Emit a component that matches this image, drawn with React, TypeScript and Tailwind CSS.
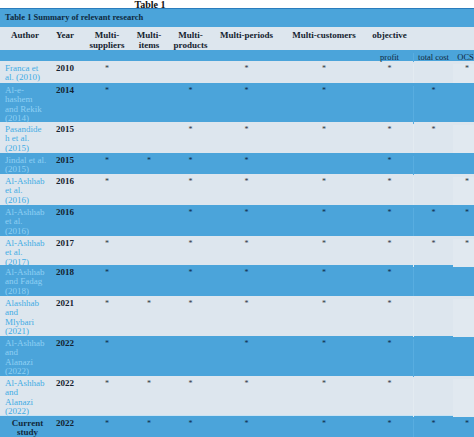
import React from 'react';

type Row = {
  author: string[];
  year: string;
  marks: number[]; // 0 sup, 1 items, 2 prod, 3 periods, 4 cust, 5 profit, 6 total, 7 ocsi
  h: string;
  blue: boolean;
  current?: boolean;
};

const cols = 'grid grid-cols-[50px_36px_42px_42px_41px_71px_84px_47px_40px_28px]';

const rows: Row[] = [
  { author: ['Franca et', 'al. (2010)'], year: '2010', marks: [0, 3, 4, 5, 7], h: 'h-[22px]', blue: false },
  { author: ['Al-e-', 'hashem', 'and Rekik', '(2014)'], year: '2014', marks: [0, 2, 3, 4, 6], h: 'h-[39px]', blue: true },
  { author: ['Pasandide', 'h et al.', '(2015)'], year: '2015', marks: [2, 3, 4, 5, 6], h: 'h-[31px]', blue: false },
  { author: ['Jindal et al.', '(2015)'], year: '2015', marks: [0, 1, 2, 3, 5], h: 'h-[21px]', blue: true },
  { author: ['Al-Ashhab', 'et al.', '(2016)'], year: '2016', marks: [0, 2, 3, 4, 5, 7], h: 'h-[31px]', blue: false },
  { author: ['Al-Ashhab', 'et al.', '(2016)'], year: '2016', marks: [2, 3, 4, 5, 6, 7], h: 'h-[31px]', blue: true },
  { author: ['Al-Ashhab', 'et al.', '(2017)'], year: '2017', marks: [0, 2, 3, 4, 5, 6, 7], h: 'h-[29px]', blue: false },
  { author: ['Al-Ashhab', 'and Fadag', '(2018)'], year: '2018', marks: [0, 2, 3, 4, 5], h: 'h-[31px]', blue: true },
  { author: ['Alashhab', 'and', 'Mlybari', '(2021)'], year: '2021', marks: [0, 1, 2, 3, 4, 5], h: 'h-[40px]', blue: false },
  { author: ['Al-Ashhab', 'and', 'Alanazi', '(2022)'], year: '2022', marks: [0, 3, 4, 5], h: 'h-[40px]', blue: true },
  { author: ['Al-Ashhab', 'and', 'Alanazi', '(2022)'], year: '2022', marks: [0, 1, 2, 3, 4, 5], h: 'h-[39px]', blue: false },
  { author: ['Current', 'study'], year: '2022', marks: [0, 1, 2, 3, 4, 5, 6, 7], h: 'h-[22px]', blue: true, current: true },
];

const App: React.FC = () => {
  return (
    <div className="w-[474px] h-[437px] overflow-hidden bg-white text-[#1b2a38] font-['Liberation_Serif','DejaVu_Serif',serif]">
      {/* caption, cut off at the top */}
      <div className="h-[8px] w-[300px] overflow-hidden flex items-end justify-center">
        <span className="text-[10px] font-bold leading-[10px] -mb-[2px] text-[#111]">Table 1</span>
      </div>

      <div className="h-[19px] border-t border-[#2a7dbd] bg-[#4ba4da] pl-[5px] pt-[3px] text-[8.5px] font-bold leading-[10px] text-[#0f2a40]">
        Table 1 Summary of relevant research
      </div>

      {/* column headings */}
      <div className={`${cols} h-[23px] bg-[#dde6ee] pt-[4px] text-[9px] font-bold leading-[9.5px] text-[#14222e]`}>
        <div className="text-center">Author</div>
        <div className="pl-[6px]">Year</div>
        <div className="text-center">Multi-<br />suppliers</div>
        <div className="text-center">Multi-<br />items</div>
        <div className="text-center">Multi-<br />products</div>
        <div className="text-center">Multi-periods</div>
        <div className="text-center">Multi-customers</div>
        <div className="text-center">objective</div>
        <div />
        <div />
      </div>

      <div className={`${cols} h-[11px] bg-[#4ba4da] pt-[2.5px] text-[8.5px] leading-[9px] text-[#10283c]`}>
        <div className="col-start-8 text-center">profit</div>
        <div className="text-center border-l border-[#58ade0]">total cost</div>
        <div className="text-center">OCSI</div>
      </div>

      {rows.map((r, i) => (
        <div
          key={i}
          className={`${cols} ${r.h} pt-[3px] text-[9px] leading-[9.4px] ${
            r.blue ? 'bg-[#4ba4da]' : 'bg-[#dde6ee]'
          } ${r.current ? 'border-t border-[#c9e3f3]' : ''}`}
        >
          <div
            className={`pl-[5px] ${
              r.current
                ? 'text-center pl-0 font-bold text-[#10283c]'
                : r.blue
                ? 'text-[#8fd0f4]'
                : 'text-[#43ace4]'
            }`}
          >
            {r.author.map((l, j) => (
              <React.Fragment key={j}>
                {l}
                {j < r.author.length - 1 && <br />}
              </React.Fragment>
            ))}
          </div>
          <div className="pl-[6px] font-bold text-[#14222e]">{r.year}</div>
          {[0, 1, 2, 3, 4, 5, 6, 7].map(c => (
            <div
              key={c}
              className={`text-center text-[8px] ${r.blue ? 'text-[#0d2a48]' : 'text-[#2b3440]'} ${
                c === 6 ? (r.blue ? 'border-l border-[#58ade0]' : 'border-l border-[#e3ebf1]') : ''
              } ${c === 7 && !r.blue ? 'bg-[#e1e9f0]' : ''}`}
            >
              {r.marks.includes(c) ? '*' : ''}
            </div>
          ))}
        </div>
      ))}
    </div>
  );
};

export default App;
